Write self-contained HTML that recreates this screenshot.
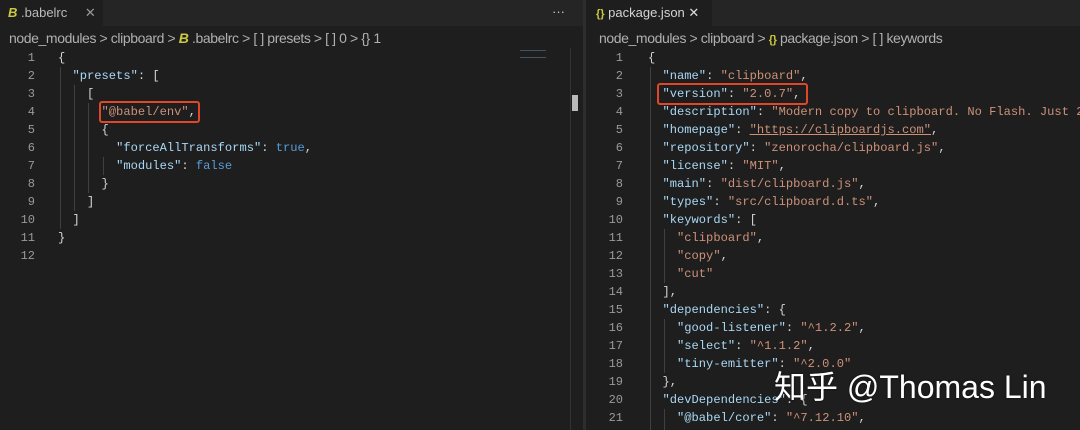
<!DOCTYPE html><html><head><meta charset="utf-8"><style>
*{margin:0;padding:0;box-sizing:border-box}
body{width:1080px;height:430px;overflow:hidden;background:#1e1e1e;position:relative;font-family:"Liberation Sans",sans-serif}
.tabbar{position:absolute;top:0;height:26px;background:#252526}
.tab{position:absolute;top:0;height:26px;background:#1e1e1e;color:#d4d4d4;font-size:13px;line-height:26px}
.bc{position:absolute;top:30px;font-size:14px;color:#b0b0b0;letter-spacing:-0.4px;white-space:pre}
.code{position:absolute;font-family:"Liberation Mono",monospace;font-size:12.1px;line-height:18px;white-space:pre;color:#d4d4d4}
.ln{position:absolute;font-family:"Liberation Mono",monospace;font-size:12px;line-height:18px;color:#9a9a9a;text-align:right;white-space:pre}
.k{color:#a9d8f5}.s{color:#ce9178}.b{color:#569cd6}
.box{position:absolute;border:2px solid #e0462a;border-radius:3px}
.g{position:absolute;width:1px;background:#404040}
</style></head><body>
<div class="tabbar" style="left:0;width:583px"></div>
<div class="tabbar" style="left:586px;width:494px"></div>
<div style="position:absolute;left:583px;top:0;width:3px;height:430px;background:#2d2d2d"></div>
<div class="tab" style="left:0;width:103px;padding-left:8px"><span style="color:#cbcb41;font-weight:bold;font-style:italic">B</span> <span style="color:#bbb">.babelrc</span> <span style="margin-left:14px;color:#999">✕</span></div>
<div style="position:absolute;left:552px;top:4px;color:#ccc;font-size:13px">···</div>
<div class="tab" style="left:586px;width:126px;padding-left:10px"><span style="color:#cbcb41;font-weight:bold;font-size:11px">{}</span> package.json <span style="color:#ddd">✕</span></div>
<div class="bc" style="left:9px">node_modules &gt; clipboard &gt; <span style="color:#cbcb41;font-weight:bold;font-style:italic">B</span> .babelrc &gt; [ ] presets &gt; [ ] 0 &gt; {} 1</div>
<div class="bc" style="left:599px">node_modules &gt; clipboard &gt; <span style="color:#cbcb41;font-weight:bold;font-size:11px">{}</span> package.json &gt; [ ] keywords</div>

<div class="ln" style="left:10px;top:49px;width:25px">1
2
3
4
5
6
7
8
9
10
11
12</div>
<div class="g" style="left:60px;top:67px;height:162px"></div>
<div class="g" style="left:74px;top:85px;height:126px"></div>
<div class="g" style="left:88px;top:103px;height:90px"></div>
<div class="g" style="left:103px;top:157px;height:18px"></div>
<div class="code" style="left:58px;top:49px">{
  <span class="k">"presets"</span>: [
    [
      <span class="s">"@babel/env"</span>,
      {
        <span class="k">"forceAllTransforms"</span>: <span class="b">true</span>,
        <span class="k">"modules"</span>: <span class="b">false</span>
      }
    ]
  ]
}</div>
<div class="box" style="left:99px;top:101px;width:101px;height:22px"></div>
<div style="position:absolute;left:520px;top:50px;width:26px;height:8px;opacity:.5;border-top:1px solid #6a8aa0;border-bottom:1px solid #6a8aa0"></div>
<div style="position:absolute;left:572px;top:95px;width:6px;height:16px;background:#bbb"></div>
<div style="position:absolute;left:570px;top:48px;width:1px;height:382px;background:#333"></div>

<div class="ln" style="left:598px;top:49px;width:25px">1
2
3
4
5
6
7
8
9
10
11
12
13
14
15
16
17
18
19
20
21</div>
<div class="g" style="left:650px;top:67px;height:363px"></div>
<div class="g" style="left:664px;top:229px;height:54px"></div>
<div class="g" style="left:664px;top:319px;height:54px"></div>
<div class="g" style="left:664px;top:409px;height:21px"></div>
<div class="code" style="left:648px;top:49px">{
  <span class="k">"name"</span>: <span class="s">"clipboard"</span>,
  <span class="k">"version"</span>: <span class="s">"2.0.7"</span>,
  <span class="k">"description"</span>: <span class="s">"Modern copy to clipboard. No Flash. Just 2</span>
  <span class="k">"homepage"</span>: <span class="s" style="text-decoration:underline">"https://clipboardjs.com"</span>,
  <span class="k">"repository"</span>: <span class="s">"zenorocha/clipboard.js"</span>,
  <span class="k">"license"</span>: <span class="s">"MIT"</span>,
  <span class="k">"main"</span>: <span class="s">"dist/clipboard.js"</span>,
  <span class="k">"types"</span>: <span class="s">"src/clipboard.d.ts"</span>,
  <span class="k">"keywords"</span>: [
    <span class="s">"clipboard"</span>,
    <span class="s">"copy"</span>,
    <span class="s">"cut"</span>
  ],
  <span class="k">"dependencies"</span>: {
    <span class="k">"good-listener"</span>: <span class="s">"^1.2.2"</span>,
    <span class="k">"select"</span>: <span class="s">"^1.1.2"</span>,
    <span class="k">"tiny-emitter"</span>: <span class="s">"^2.0.0"</span>
  },
  <span class="k">"devDependencies"</span>: {
    <span class="k">"@babel/core"</span>: <span class="s">"^7.12.10"</span>,</div>
<div class="box" style="left:657px;top:83px;width:151px;height:22px"></div>
<div style="position:absolute;left:774px;top:362px;font-size:32px;color:#fff;font-family:'Liberation Sans','Noto Sans CJK SC',sans-serif;white-space:nowrap;text-shadow:0 0 2px rgba(0,0,0,.6)">知乎 @Thomas Lin</div>
</body></html>
